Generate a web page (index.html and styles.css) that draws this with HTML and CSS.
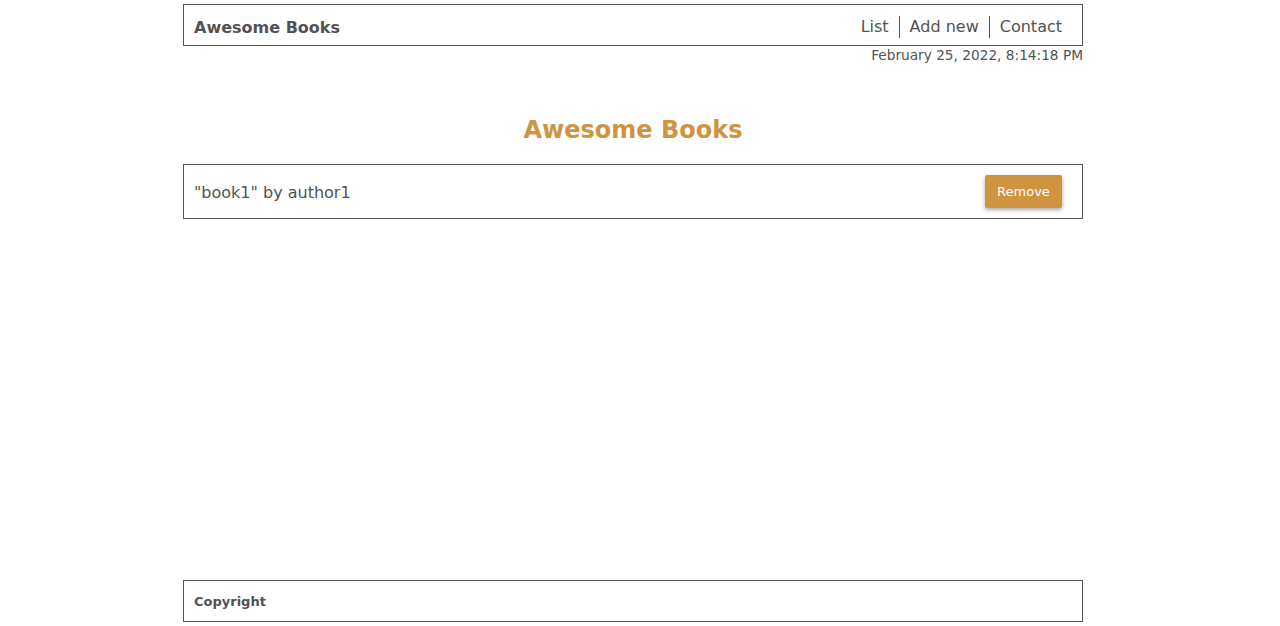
FILE: index.html
```html
<!DOCTYPE html>
<html lang="en">
<head>
<meta charset="utf-8">
<title>Awesome Books</title>
<link rel="stylesheet" href="styles.css">
</head>
<body>
<div class="page">
  <header class="topbar">
    <div class="brand">Awesome Books</div>
    <nav class="nav">
      <a class="nav-link" href="#">List</a>
      <a class="nav-link" href="#">Add new</a>
      <a class="nav-link" href="#">Contact</a>
    </nav>
  </header>
  <div class="date">February 25, 2022, 8:14:18 PM</div>
  <main class="content">
    <h1 class="title">Awesome Books</h1>
    <ul class="books">
      <li class="book">
        <span class="book-text">"book1" by author1</span>
        <button class="remove" type="button">Remove</button>
      </li>
    </ul>
  </main>
  <footer class="footer">Copyright</footer>
</div>
</body>
</html>
```
FILE: styles.css
```css
* { box-sizing: border-box; }
html, body { margin: 0; padding: 0; height: 100%; }
body {
  font-family: "DejaVu Sans", Verdana, sans-serif;
  color: #525252;
  background: #fff;
}
.page {
  width: 900px;
  margin-left: 183px;
  height: 626px;
  padding-top: 4px;
  display: flex;
  flex-direction: column;
}
.topbar {
  height: 42px;
  border: 1px solid #555;
  display: flex;
  align-items: center;
  justify-content: space-between;
  padding: 4px 20px 0 10px;
}
.brand {
  font-weight: bold;
  font-size: 16px;
}
.nav { display: flex; }
.nav-link {
  color: #525252;
  text-decoration: none;
  font-size: 16px;
  padding: 0 10px;
  border-left: 1px solid #555;
  line-height: 22px;
}
.nav-link:first-child { border-left: none; }
.nav-link:last-child { padding-right: 0; }
.date {
  text-align: right;
  font-size: 13.7px;
  margin-top: 1px;
  line-height: 17px;
}
.content { flex: 1; }
.title {
  margin: 51px 0 19px;
  text-align: center;
  color: #cf9440;
  font-size: 24px;
  line-height: 30px;
}
.books { list-style: none; margin: 0; padding: 0; }
.book {
  border: 1px solid #555;
  height: 55px;
  display: flex;
  align-items: center;
  justify-content: space-between;
  padding: 2px 20px 0 10px;
}
.book-text { font-size: 16px; }
.remove {
  background: #cf9440;
  color: #fff;
  border: none;
  border-radius: 2px;
  font-family: "DejaVu Sans", Verdana, sans-serif;
  font-size: 13px;
  width: 77px;
  height: 33px;
  margin-top: -2px;
  box-shadow: 0 2px 4px rgba(0,0,0,0.35);
}
.footer {
  height: 42px;
  border: 1px solid #555;
  display: flex;
  align-items: center;
  padding: 1px 10px 0;
  font-weight: bold;
  font-size: 13px;
  margin-bottom: 4px;
}
```
